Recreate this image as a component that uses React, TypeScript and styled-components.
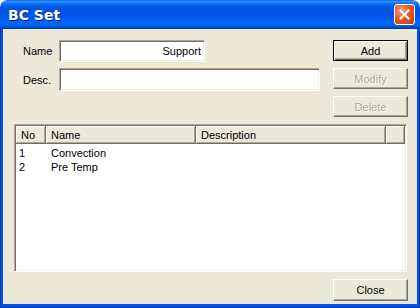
import React from 'react'
import styled, { createGlobalStyle } from 'styled-components'

const GlobalStyle = createGlobalStyle`
    html, body {
        margin: 0;
        padding: 0;
        background: #ffffff;
    }
    body {
        font-family: "Liberation Sans", Arial, sans-serif;
        font-size: 11px;
    }
`

const Window = styled.div`
    width: 420px;
    height: 308px;
    display: flex;
    flex-direction: column;
    overflow: hidden;
    border-radius: 7px 7px 0 0;
`

const TitleBar = styled.div`
    height: 29px;
    flex: none;
    display: flex;
    align-items: center;
    justify-content: space-between;
    padding: 1px 5px 0 8px;
    box-sizing: border-box;
    border-radius: 7px 7px 0 0;
    background: linear-gradient(
        to bottom,
        #0058ee 0%,
        #3593ff 4%,
        #288eff 7%,
        #127dff 10%,
        #036ffc 14%,
        #0262ee 18%,
        #0057e5 24%,
        #0054e3 30%,
        #0055eb 56%,
        #005bf5 66%,
        #026afe 76%,
        #0062ef 86%,
        #0052d6 93%,
        #0040ab 97%,
        #003092 100%
    );
`

const Title = styled.span`
    font-family: "DejaVu Sans", sans-serif;
    font-weight: bold;
    font-size: 14px;
    color: #ffffff;
    text-shadow: 1px 1px #0a1883;
`

const CloseBox = styled.div`
    width: 21px;
    height: 21px;
    margin-top: -1px;
    box-sizing: border-box;
    border: 1px solid #ffffff;
    border-radius: 3px;
    background: radial-gradient(circle at 35% 30%, #f4a486 0%, #e35a2a 45%, #c8390f 100%);
    display: flex;
    align-items: center;
    justify-content: center;
`

const Frame = styled.div`
    flex: 1;
    display: flex;
    background: #0055ea;
    padding: 0 3px 4px 3px;
    box-shadow: inset 1px 0 #0831b0, inset -1px 0 #0831b0, inset 0 -1px #0831b0;
`

const Body = styled.div`
    flex: 1;
    background: #ece9d8;
    display: flex;
    flex-direction: column;
    padding: 11px 10px 3px 11px;
    color: #000000;
`

const TopSection = styled.div`
    display: flex;
    justify-content: space-between;
    height: 77px;
`

const Form = styled.div`
    display: flex;
    flex-direction: column;
    gap: 6px;
    padding-left: 9px;
`

const FieldRow = styled.div`
    display: flex;
    align-items: center;
`

const Label = styled.label`
    width: 36px;
`

const Field = styled.div<{ $width: number; $height: number }>`
    width: ${p => p.$width}px;
    height: ${p => p.$height}px;
    box-sizing: border-box;
    background: #ffffff;
    border: 1px solid;
    border-color: #aca899 #ffffff #ffffff #aca899;
    box-shadow: inset 1px 1px #716f64, inset -1px -1px #f1efe2;
    display: flex;
    align-items: center;
    justify-content: flex-end;
    padding: 0 3px 0 4px;
`

const ButtonColumn = styled.div`
    display: flex;
    flex-direction: column;
    gap: 7px;
    margin-right: -1px;
`

const Button = styled.button<{ $default?: boolean; $height?: number }>`
    width: 75px;
    height: ${p => (p.$height ? p.$height : 21)}px;
    box-sizing: border-box;
    padding: 0;
    font-family: "Liberation Sans", Arial, sans-serif;
    font-size: 11px;
    color: #000000;
    background: #ece9d8;
    border: 1px solid;
    border-color: ${p => (p.$default ? '#000000' : '#ffffff #716f64 #716f64 #ffffff')};
    box-shadow: ${p =>
        p.$default
            ? 'inset 1px 1px #ffffff, inset -1px -1px #716f64, inset -2px -2px #aca899'
            : 'inset -1px -1px #aca899'};

    &:disabled {
        color: #aca899;
        text-shadow: 1px 1px #ffffff;
    }
`

const List = styled.div`
    margin-top: 7px;
    height: 148px;
    box-sizing: border-box;
    background: #ffffff;
    border: 1px solid;
    border-color: #aca899 #ffffff #ffffff #aca899;
    box-shadow: inset 1px 1px #716f64, inset -1px -1px #f1efe2;
    padding: 1px;
    display: flex;
    flex-direction: column;
`

const HeaderRow = styled.div`
    display: flex;
    height: 18px;
    flex: none;
`

const HeaderCell = styled.div<{ $width?: number }>`
    ${p => (p.$width ? `width: ${p.$width}px;` : 'flex: 1;')}
    box-sizing: border-box;
    background: #ece9d8;
    border-right: 1px solid #716f64;
    border-bottom: 1px solid #716f64;
    box-shadow: inset 1px 1px #ffffff, inset -1px -1px #aca899;
    padding-left: 5px;
    display: flex;
    align-items: center;
    white-space: nowrap;
    overflow: hidden;
`

const Rows = styled.div`
    padding-top: 2px;
`

const Row = styled.div`
    display: flex;
    height: 14px;
    align-items: center;
`

const Cell = styled.div<{ $width: number; $pad: number }>`
    width: ${p => p.$width}px;
    padding-left: ${p => p.$pad}px;
    box-sizing: border-box;
    white-space: nowrap;
`

const Footer = styled.div`
    margin-top: 7px;
    display: flex;
    justify-content: flex-end;
    margin-right: -1px;
`

const rows = [
    { no: '1', name: 'Convection', desc: '' },
    { no: '2', name: 'Pre Temp', desc: '' },
]

const App = () => {
    return (
        <Window>
            <GlobalStyle />
            <TitleBar>
                <Title>BC Set</Title>
                <CloseBox>
                    <svg width="11" height="11" viewBox="0 0 11 11">
                        <path d="M1.5 1.5 L9.5 9.5 M9.5 1.5 L1.5 9.5" stroke="#ffffff" strokeWidth="2" strokeLinecap="square" />
                    </svg>
                </CloseBox>
            </TitleBar>
            <Frame>
                <Body>
                    <TopSection>
                        <Form>
                            <FieldRow>
                                <Label>Name</Label>
                                <Field $width={146} $height={22}>Support</Field>
                            </FieldRow>
                            <FieldRow>
                                <Label>Desc.</Label>
                                <Field $width={261} $height={23}></Field>
                            </FieldRow>
                        </Form>
                        <ButtonColumn>
                            <Button $default>Add</Button>
                            <Button disabled>Modify</Button>
                            <Button disabled>Delete</Button>
                        </ButtonColumn>
                    </TopSection>
                    <List>
                        <HeaderRow>
                            <HeaderCell $width={30}>No</HeaderCell>
                            <HeaderCell $width={150}>Name</HeaderCell>
                            <HeaderCell $width={190}>Description</HeaderCell>
                            <HeaderCell />
                        </HeaderRow>
                        <Rows>
                            {rows.map(r => (
                                <Row key={r.no}>
                                    <Cell $width={30} $pad={3}>{r.no}</Cell>
                                    <Cell $width={150} $pad={5}>{r.name}</Cell>
                                    <Cell $width={190} $pad={5}>{r.desc}</Cell>
                                </Row>
                            ))}
                        </Rows>
                    </List>
                    <Footer>
                        <Button $height={22}>Close</Button>
                    </Footer>
                </Body>
            </Frame>
        </Window>
    )
}

export default App
